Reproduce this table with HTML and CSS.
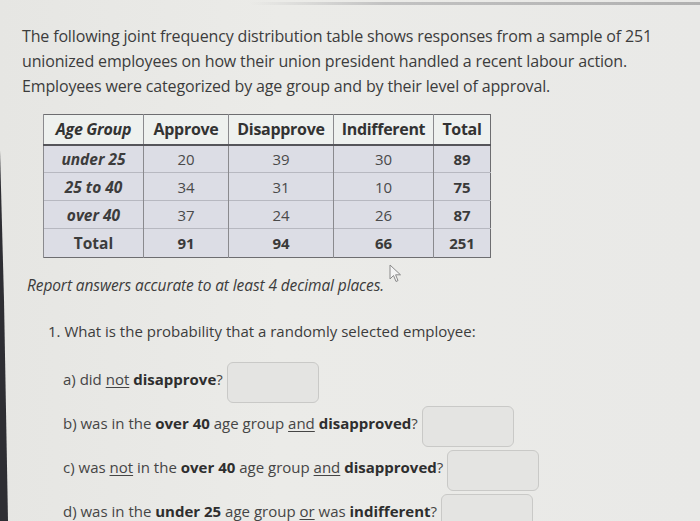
FILE: index.html
```html
<!DOCTYPE html>
<html lang="en">
<head>
<meta charset="utf-8">
<title>Joint frequency distribution</title>
<link rel="stylesheet" href="styles.css">
</head>
<body>
<div class="edge-top"></div>
<div class="edge-left"></div>
<main class="page">
  <p class="intro">The following joint frequency distribution table shows responses from a sample of 251 unionized employees on how their union president handled a recent labour action. Employees were categorized by age group and by their level of approval.</p>

  <table class="freq">
    <colgroup>
      <col class="c1"><col class="c2"><col class="c3"><col class="c4"><col class="c5">
    </colgroup>
    <thead>
      <tr><th class="ital">Age Group</th><th>Approve</th><th>Disapprove</th><th>Indifferent</th><th>Total</th></tr>
    </thead>
    <tbody>
      <tr><td class="rowh ital">under 25</td><td>20</td><td>39</td><td>30</td><td class="b">89</td></tr>
      <tr><td class="rowh ital">25 to 40</td><td>34</td><td>31</td><td>10</td><td class="b">75</td></tr>
      <tr><td class="rowh ital">over 40</td><td>37</td><td>24</td><td>26</td><td class="b">87</td></tr>
      <tr class="tot"><td class="rowh">Total</td><td class="b">91</td><td class="b">94</td><td class="b">66</td><td class="b">251</td></tr>
    </tbody>
  </table>

  <p class="note">Report answers accurate to at least 4 decimal places.</p>

  <p class="q1">1. What is the probability that a randomly selected employee:</p>

  <div class="questions">
    <div class="qrow r-a"><span class="qtext">a) did <u>not</u> <b>disapprove</b>?</span><span class="box"></span></div>
    <div class="qrow r-b"><span class="qtext">b) was in the <b>over 40</b> age group <u>and</u> <b>disapproved</b>?</span><span class="box"></span></div>
    <div class="qrow r-c"><span class="qtext">c) was <u>not</u> in the <b>over 40</b> age group <u>and</u> <b>disapproved</b>?</span><span class="box"></span></div>
    <div class="qrow r-d"><span class="qtext">d) was in the <b>under 25</b> age group <u>or</u> was <b>indifferent</b>?</span><span class="box"></span></div>
  </div>
</main>
<svg class="cursor" width="14" height="20" viewBox="0 0 14 20"><path d="M1 1 L1 15 L4.5 11.5 L7 17.5 L9 16.6 L6.6 10.8 L11.5 10.8 Z" fill="#f4f4f4" stroke="#8a8a8a" stroke-width="1"/></svg>
</body>
</html>
```

FILE: styles.css
```css
* { box-sizing: border-box; }
html, body { margin: 0; padding: 0; }
body {
  width: 700px;
  height: 521px;
  overflow: hidden;
  position: relative;
  background: linear-gradient(90deg, #e6e6e3 0%, #ebebe8 40%, #e9e9e7 100%);
  font-family: "Open Sans", "Noto Sans", sans-serif;
  color: #3c3c3c;
}
.edge-top {
  position: absolute;
  left: 250px; right: 0; top: 2px;
  height: 3px;
  background: linear-gradient(90deg, rgba(160,160,160,0) 0%, #c2c2c2 30%, #b0b0b0 100%);
}
.edge-left {
  position: absolute;
  left: 0; top: 0; width: 10px; height: 521px;
  background: #2e2e33;
  clip-path: polygon(0 150px, 4px 300px, 8px 521px, 0 521px);
}
.page {
  padding: 24px 0 0 22px;
}
.intro {
  margin: 0;
  width: 660px;
  font-size: 16px;
  line-height: 25px;
  letter-spacing: -0.15px;
}
.freq {
  margin: 15px 0 0 21px;
  border-collapse: collapse;
  table-layout: fixed;
  width: 447px;
  border: 1px solid #6d6d70;
  font-size: 15px;
}
.c1 { width: 100px; }
.c2 { width: 85px; }
.c3 { width: 105px; }
.c4 { width: 100px; }
.c5 { width: 57px; }
.freq th {
  background: #eef1ef;
  height: 30px;
  font-size: 16px;
  font-weight: 700;
  color: #333;
  border-left: 1px solid #8a8a8e;
  border-bottom: 2px solid #55555a;
  padding: 0;
  text-align: center;
  letter-spacing: -0.3px;
}
.freq td {
  background: #dcdde5;
  height: 28px;
  text-align: center;
  padding: 0;
  border-left: 1px solid #8a8a8e;
  border-top: 1px solid #b7b8c0;
  color: #4a4a4a;
}
.freq .tot td { height: 29px; }
.freq .ital { font-style: italic; }
.freq .rowh { font-weight: 700; color: #3c3c3c; font-size: 15.5px; }
.freq .b { font-weight: 700; color: #3a3a3a; }
.note {
  margin: 16px 0 0 5px;
  font-size: 15.5px;
  font-style: italic;
  line-height: 22px;
  letter-spacing: -0.1px;
}
.q1 {
  margin: 23px 0 0 26px;
  font-size: 15px;
  line-height: 24px;
}
.questions {
  margin: 19px 0 0 41px;
  display: flex;
  flex-direction: column;
  gap: 3px;
  font-size: 15px;
  color: #454545;
}
.qrow {
  display: flex;
  align-items: center;
  gap: 4px;
  height: 41px;
}
.qtext {
  line-height: 20px;
  padding-bottom: 7px;
}
.qrow b { color: #2e2e2e; }
.qrow u { text-underline-offset: 2px; }
.box {
  width: 92px;
  height: 41px;
  border: 1px solid #c9c9c7;
  border-radius: 6px;
  background: #e4e4e2;
}
.cursor {
  position: absolute;
  left: 389px;
  top: 264px;
}
```
